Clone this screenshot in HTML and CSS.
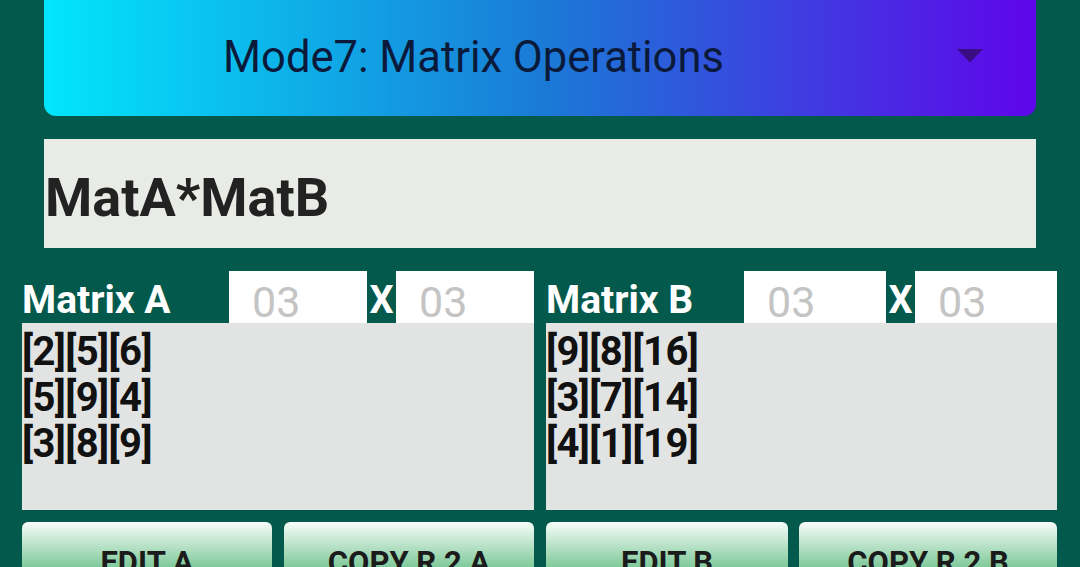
FILE: index.html
```html
<!DOCTYPE html>
<html>
<head>
<meta charset="utf-8">
<link rel="stylesheet" href="styles.css">
</head>
<body>
<div class="app">
  <div class="dropdown">
    <div class="dropdown-text">Mode7: Matrix Operations</div>
    <svg class="dropdown-arrow" width="26" height="14" viewBox="0 0 26 14"><polygon points="0,0 26,0 13,13.5" fill="#3a0d85"/></svg>
  </div>
  <div class="formula">MatA*MatB</div>
  <div class="panels">
    <div class="panel">
      <div class="header header-a">
        <div class="label">Matrix A</div>
        <div class="dim">03</div>
        <div class="times">X</div>
        <div class="dim">03</div>
      </div>
      <div class="matrix">[2][5][6]<br>[5][9][4]<br>[3][8][9]</div>
      <div class="btns btns-a">
        <div class="btn">EDIT A</div>
        <div class="btn">COPY R 2 A</div>
      </div>
    </div>
    <div class="panel">
      <div class="header header-b">
        <div class="label">Matrix B</div>
        <div class="dim">03</div>
        <div class="times">X</div>
        <div class="dim">03</div>
      </div>
      <div class="matrix">[9][8][16]<br>[3][7][14]<br>[4][1][19]</div>
      <div class="btns btns-b">
        <div class="btn">EDIT B</div>
        <div class="btn">COPY R 2 B</div>
      </div>
    </div>
  </div>
</div>
</body>
</html>
```

FILE: styles.css
```css
html, body {
  margin: 0;
  padding: 0;
  background: #02594c;
  font-family: Roboto, "Liberation Sans", sans-serif;
  overflow: hidden;
}

.app {
  width: 1080px;
  height: 567px;
  overflow: hidden;
}

.dropdown {
  margin: 0 44px;
  height: 116px;
  border-radius: 0 0 12px 12px;
  background: linear-gradient(90deg, #02e6fc 0%, #1a7bd6 50%, #5f05ea 100%);
  display: flex;
  align-items: center;
}

.dropdown-text {
  width: 859px;
  text-align: center;
  font-size: 43.5px;
  color: #0b1a3b;
  margin-top: -1px;
}

.dropdown-arrow {
  margin-left: 54px;
  margin-top: -5px;
}

.formula {
  margin: 23px 44px 0;
  height: 109px;
  background: #e8ebe6;
  display: flex;
  align-items: center;
  padding-left: 1px;
  padding-top: 8px;
  box-sizing: border-box;
  font-size: 54px;
  font-weight: 700;
  color: #222222;
}

.panels {
  margin: 23px 0 0 22px;
  display: grid;
  grid-template-columns: 512px 511px;
  column-gap: 12px;
}

.header {
  display: grid;
  height: 52px;
}

.header-a {
  grid-template-columns: 207px 138px 29px 138px;
}

.header-b {
  grid-template-columns: 198px 142px 29px 142px;
}

.label {
  color: #ffffff;
  font-weight: 700;
  font-size: 39px;
  line-height: 46px;
  padding-top: 6px;
  white-space: nowrap;
}

.dim {
  background: #ffffff;
  color: #c4c4c4;
  font-size: 43px;
  line-height: 41px;
  padding-top: 11px;
  padding-left: 23px;
}

.times {
  color: #ffffff;
  font-weight: 700;
  font-size: 38px;
  line-height: 46px;
  padding-top: 6px;
  text-align: center;
}

.matrix {
  background: #e2e4e3;
  height: 187px;
  box-sizing: border-box;
  padding-top: 6px;
  font-size: 40px;
  font-weight: 700;
  line-height: 46px;
  color: #111111;
  letter-spacing: -0.6px;
}

.btns {
  display: grid;
  margin-top: 12px;
}

.btns-a {
  grid-template-columns: 250px 250px;
  column-gap: 12px;
}

.btns-b {
  grid-template-columns: 242px 258px;
  column-gap: 11px;
}

.btn {
  height: 80px;
  border-radius: 6px;
  background: linear-gradient(180deg, #f7fcf9 0px, #80ca9b 45px, #6bbf8a 80px);
  display: flex;
  align-items: center;
  justify-content: center;
  font-size: 31px;
  font-weight: 700;
  color: #1b1b1b;
}
```
